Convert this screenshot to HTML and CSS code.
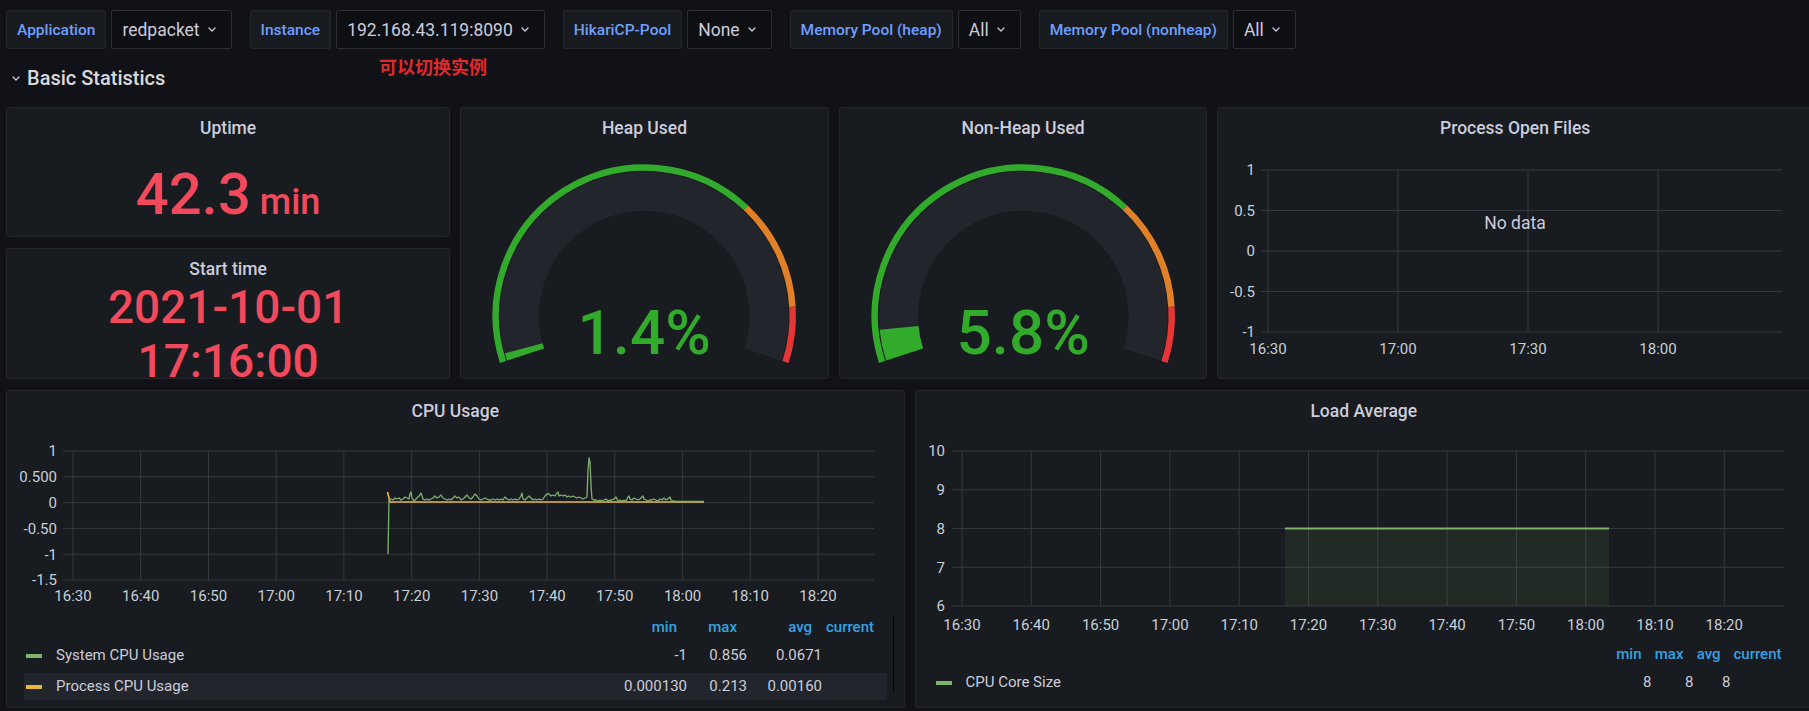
FILE: index.html
```html
<!DOCTYPE html>
<html lang="zh">
<head>
<meta charset="utf-8">
<title>JVM Dashboard</title>
<link rel="stylesheet" href="styles.css">
</head>
<body>
<div class="topbar">
  <div class="var">
    <span class="var-label">Application</span>
    <span class="var-select">redpacket<svg class="chev" width="8" height="5" viewBox="0 0 8 5"><path d="M1 1l3 3 3-3"/></svg></span>
  </div>
  <div class="var">
    <span class="var-label">Instance</span>
    <span class="var-select">192.168.43.119:8090<svg class="chev" width="8" height="5" viewBox="0 0 8 5"><path d="M1 1l3 3 3-3"/></svg></span>
  </div>
  <div class="var">
    <span class="var-label">HikariCP-Pool</span>
    <span class="var-select">None<svg class="chev" width="8" height="5" viewBox="0 0 8 5"><path d="M1 1l3 3 3-3"/></svg></span>
  </div>
  <div class="var">
    <span class="var-label">Memory Pool (heap)</span>
    <span class="var-select">All<svg class="chev" width="8" height="5" viewBox="0 0 8 5"><path d="M1 1l3 3 3-3"/></svg></span>
  </div>
  <div class="var">
    <span class="var-label">Memory Pool (nonheap)</span>
    <span class="var-select">All<svg class="chev" width="8" height="5" viewBox="0 0 8 5"><path d="M1 1l3 3 3-3"/></svg></span>
  </div>
</div>
<div class="note">可以切换实例</div>
<div class="row-title"><svg class="chev" width="8" height="5" viewBox="0 0 8 5"><path d="M1 1l3 3 3-3"/></svg><span>Basic Statistics</span></div>

<div class="grid">
  <section class="panel p-uptime">
    <div class="panel-title">Uptime</div>
    <div class="stat-value"><span>42.3<span class="unit"> min</span></span></div>
  </section>

  <section class="panel p-start">
    <div class="panel-title">Start time</div>
    <div class="stat-value"><span class="date">2021-10-01<br>17:16:00</span></div>
  </section>

  <section class="panel p-heap">
    <div class="panel-title">Heap Used</div>
    <svg class="gauge" width="100%" height="229">
      <svg x="50%" y="167" width="1" height="1" overflow="visible">
        <path class="band" d="M -118.69 38.57 A 124.8 124.8 0 1 1 118.69 38.57"/>
        <path class="band-val" d="M -118.69 38.57 A 124.8 124.8 0 0 1 -120.56 32.25"/>
        <path class="ring g" d="M -141.23 45.89 A 148.5 148.5 0 0 1 101.66 -108.25"/>
        <path class="ring o" d="M 101.66 -108.25 A 148.5 148.5 0 0 1 148.21 -9.32"/>
        <path class="ring r" d="M 148.21 -9.32 A 148.5 148.5 0 0 1 141.23 45.89"/>
        <text class="gauge-text" x="0" y="38">1.4%</text>
      </svg>
    </svg>
  </section>

  <section class="panel p-nonheap">
    <div class="panel-title">Non-Heap Used</div>
    <svg class="gauge" width="100%" height="229">
      <svg x="50%" y="167" width="1" height="1" overflow="visible">
        <path class="band" d="M -118.69 38.57 A 124.8 124.8 0 1 1 118.69 38.57"/>
        <path class="band-val" d="M -118.69 38.57 A 124.8 124.8 0 0 1 -124.23 11.90"/>
        <path class="ring g" d="M -141.23 45.89 A 148.5 148.5 0 0 1 101.66 -108.25"/>
        <path class="ring o" d="M 101.66 -108.25 A 148.5 148.5 0 0 1 148.21 -9.32"/>
        <path class="ring r" d="M 148.21 -9.32 A 148.5 148.5 0 0 1 141.23 45.89"/>
        <text class="gauge-text" x="0" y="38">5.8%</text>
      </svg>
    </svg>
  </section>

  <section class="panel p-files">
    <div class="panel-title">Process Open Files</div>
    <svg class="chart" width="600" height="229">
      <g transform="translate(-1218,-149)">
        <g class="grid-lines">
          <line x1="1261" y1="170" x2="1782" y2="170"/>
          <line x1="1261" y1="210.5" x2="1782" y2="210.5"/>
          <line x1="1261" y1="251" x2="1782" y2="251"/>
          <line x1="1261" y1="291.5" x2="1782" y2="291.5"/>
          <line x1="1261" y1="332" x2="1782" y2="332"/>
          <line x1="1268" y1="170" x2="1268" y2="332"/>
          <line x1="1398" y1="170" x2="1398" y2="332"/>
          <line x1="1528" y1="170" x2="1528" y2="332"/>
          <line x1="1658" y1="170" x2="1658" y2="332"/>
        </g>
        <g class="ylab">
          <text x="1255" y="175">1</text>
          <text x="1255" y="215.5">0.5</text>
          <text x="1255" y="256">0</text>
          <text x="1255" y="296.5">-0.5</text>
          <text x="1255" y="337">-1</text>
        </g>
        <g class="xlab">
          <text x="1268" y="354">16:30</text>
          <text x="1398" y="354">17:00</text>
          <text x="1528" y="354">17:30</text>
          <text x="1658" y="354">18:00</text>
        </g>
        <text class="nodata" x="1515" y="229">No data</text>
      </g>
    </svg>
  </section>

  <section class="panel p-cpu">
    <div class="panel-title">CPU Usage</div>
    <svg class="chart" width="896" height="180">
      <g transform="translate(-7,-432)">
        <g class="grid-lines">
          <line x1="63" y1="451" x2="874" y2="451"/>
          <line x1="63" y1="476.8" x2="874" y2="476.8"/>
          <line x1="63" y1="502.6" x2="874" y2="502.6"/>
          <line x1="63" y1="528.4" x2="874" y2="528.4"/>
          <line x1="63" y1="554.2" x2="874" y2="554.2"/>
          <line x1="63" y1="580" x2="874" y2="580"/>
          <line x1="73" y1="451" x2="73" y2="580"/>
          <line x1="140.7" y1="451" x2="140.7" y2="580"/>
          <line x1="208.5" y1="451" x2="208.5" y2="580"/>
          <line x1="276.2" y1="451" x2="276.2" y2="580"/>
          <line x1="343.9" y1="451" x2="343.9" y2="580"/>
          <line x1="411.7" y1="451" x2="411.7" y2="580"/>
          <line x1="479.4" y1="451" x2="479.4" y2="580"/>
          <line x1="547.1" y1="451" x2="547.1" y2="580"/>
          <line x1="614.8" y1="451" x2="614.8" y2="580"/>
          <line x1="682.6" y1="451" x2="682.6" y2="580"/>
          <line x1="750.3" y1="451" x2="750.3" y2="580"/>
          <line x1="818" y1="451" x2="818" y2="580"/>
        </g>
        <g class="ylab">
          <text x="57" y="456.3">1</text>
          <text x="57" y="482.1">0.500</text>
          <text x="57" y="507.9">0</text>
          <text x="57" y="533.7">-0.50</text>
          <text x="57" y="559.5">-1</text>
          <text x="57" y="585.3">-1.5</text>
        </g>
        <g class="xlab">
          <text x="73" y="601">16:30</text>
          <text x="140.7" y="601">16:40</text>
          <text x="208.5" y="601">16:50</text>
          <text x="276.2" y="601">17:00</text>
          <text x="343.9" y="601">17:10</text>
          <text x="411.7" y="601">17:20</text>
          <text x="479.4" y="601">17:30</text>
          <text x="547.1" y="601">17:40</text>
          <text x="614.8" y="601">17:50</text>
          <text x="682.6" y="601">18:00</text>
          <text x="750.3" y="601">18:10</text>
          <text x="818" y="601">18:20</text>
        </g>
        <polyline class="s-yellow" points="387.5,492 390,502 704,502"/>
        <polyline class="s-green" points="388,554 389,500 391,499 393,500 395,498 397,499 399,498 401,500 403,499 405,497 407,498 409,499 410,494 411,492 412,498 414,501 416,499 418,497 420,495 421,493 423,499 425,500 427,499 429,500 431,499 433,498 435,496 437,498 439,497 441,495 443,498 445,499 447,500 449,499 451,500 453,498 455,496 457,498 459,497 461,500 463,499 465,497 467,495 469,498 471,499 473,497 475,494 477,496 479,499 481,500 483,499 485,498 487,499 489,500 491,500 493,499 495,500 497,499 499,500 501,499 503,500 505,497 507,499 509,500 511,499 513,500 515,499 517,500 519,499 521,496 522,493 523,499 525,500 527,498 529,496 531,498 533,500 535,499 537,500 539,499 541,500 543,499 545,496 547,494 549,494 551,496 553,495 555,496 557,493 558,492 559,496 561,495 563,496 565,495 567,497 569,496 571,497 573,496 575,497 577,498 579,497 581,498 583,499 585,498 587,497 588,470 589,458 590,462 591,485 592,499 594,500 596,500 598,501 600,500 602,501 604,500 606,499 608,501 610,500 612,500 614,499 616,497 618,501 620,500 622,501 624,500 626,501 628,497 629,496 630,499 632,500 634,498 636,499 638,500 640,499 642,497 643,496 644,499 646,500 648,501 650,500 652,500 654,499 656,500 658,501 660,499 662,500 664,498 666,500 668,499 670,497 671,500 673,501 676,501.5 704,501.5"/>
      </g>
    </svg>
    <div class="legend-wrap">
      <div class="legend cpu-legend">
        <div class="lg-row lg-head">
          <span></span><span class="lg-h">min</span><span class="lg-h">max</span><span class="lg-h">avg</span><span class="lg-h">current</span>
        </div>
        <div class="lg-row">
          <span class="lg-name"><i class="sw sw-green"></i>System CPU Usage</span><span class="lg-v">-1</span><span class="lg-v">0.856</span><span class="lg-v">0.0671</span><span class="lg-v"></span>
        </div>
        <div class="lg-row lg-hl">
          <span class="lg-name"><i class="sw sw-yellow"></i>Process CPU Usage</span><span class="lg-v">0.000130</span><span class="lg-v">0.213</span><span class="lg-v">0.00160</span><span class="lg-v"></span>
        </div>
      </div>
      <div class="scroll-line"></div>
    </div>
  </section>

  <section class="panel p-load">
    <div class="panel-title">Load Average</div>
    <svg class="chart" width="896" height="205">
      <g transform="translate(-915,-432)">
        <g class="grid-lines">
          <line x1="951" y1="451" x2="1783" y2="451"/>
          <line x1="951" y1="489.75" x2="1783" y2="489.75"/>
          <line x1="951" y1="528.5" x2="1783" y2="528.5"/>
          <line x1="951" y1="567.25" x2="1783" y2="567.25"/>
          <line x1="951" y1="606" x2="1783" y2="606"/>
          <line x1="961" y1="451" x2="961" y2="606"/>
          <line x1="1030.3" y1="451" x2="1030.3" y2="606"/>
          <line x1="1099.6" y1="451" x2="1099.6" y2="606"/>
          <line x1="1168.9" y1="451" x2="1168.9" y2="606"/>
          <line x1="1238.2" y1="451" x2="1238.2" y2="606"/>
          <line x1="1307.5" y1="451" x2="1307.5" y2="606"/>
          <line x1="1376.8" y1="451" x2="1376.8" y2="606"/>
          <line x1="1446.1" y1="451" x2="1446.1" y2="606"/>
          <line x1="1515.4" y1="451" x2="1515.4" y2="606"/>
          <line x1="1584.7" y1="451" x2="1584.7" y2="606"/>
          <line x1="1654" y1="451" x2="1654" y2="606"/>
          <line x1="1723.3" y1="451" x2="1723.3" y2="606"/>
        </g>
        <g class="ylab">
          <text x="944" y="456.3">10</text>
          <text x="944" y="495">9</text>
          <text x="944" y="533.8">8</text>
          <text x="944" y="572.5">7</text>
          <text x="944" y="611.3">6</text>
        </g>
        <g class="xlab">
          <text x="961" y="630">16:30</text>
          <text x="1030.3" y="630">16:40</text>
          <text x="1099.6" y="630">16:50</text>
          <text x="1168.9" y="630">17:00</text>
          <text x="1238.2" y="630">17:10</text>
          <text x="1307.5" y="630">17:20</text>
          <text x="1376.8" y="630">17:30</text>
          <text x="1446.1" y="630">17:40</text>
          <text x="1515.4" y="630">17:50</text>
          <text x="1584.7" y="630">18:00</text>
          <text x="1654" y="630">18:10</text>
          <text x="1723.3" y="630">18:20</text>
        </g>
        <rect class="area" x="1284" y="528.5" width="324" height="77.5"/>
        <line class="s-green thick" x1="1284" y1="528.5" x2="1608" y2="528.5"/>
      </g>
    </svg>
    <div class="legend load-legend">
      <div class="lg-row lg-head">
        <span></span><span class="lg-h">min</span><span class="lg-h">max</span><span class="lg-h">avg</span><span class="lg-h">current</span>
      </div>
      <div class="lg-row">
        <span class="lg-name"><i class="sw sw-green"></i>CPU Core Size</span><span class="lg-v">8</span><span class="lg-v">8</span><span class="lg-v">8</span><span class="lg-v"></span>
      </div>
    </div>
  </section>
</div>
</body>
</html>
```
FILE: styles.css
```css
html, body {
  margin: 0;
  padding: 0;
  background: #111217;
  overflow: hidden;
}
body {
  width: 1809px;
  height: 711px;
  position: relative;
  font-family: Roboto, "Noto Sans", sans-serif;
  color: #ccccdc;
}

/* ---------- variables bar ---------- */
.topbar {
  display: flex;
  gap: 18px;
  padding: 10px 0 0 6px;
  height: 39px;
}
.var {
  display: flex;
  gap: 5px;
}
.var-label {
  display: flex;
  align-items: center;
  height: 39px;
  box-sizing: border-box;
  padding: 0 10px;
  background: #181b1f;
  border: 1px solid #24262b;
  border-radius: 2px;
  color: #6e9fff;
  font-size: 15.5px;
  font-weight: 500;
}
.var-select {
  display: flex;
  align-items: center;
  gap: 8px;
  height: 39px;
  box-sizing: border-box;
  padding: 0 15px 0 10px;
  background: #0e0f13;
  border: 1px solid #2b2d32;
  border-radius: 2px;
  color: #ccccdc;
  font-size: 17.5px;
}
.chev path {
  fill: none;
  stroke: #ccccdc;
  stroke-width: 1.3;
  stroke-linecap: round;
  stroke-linejoin: round;
}

.note {
  position: absolute;
  left: 379px;
  top: 53px;
  line-height: 26px;
  font-family: "Noto Sans CJK SC", "Noto Sans", sans-serif;
  font-size: 18px;
  font-weight: 700;
  color: #e0292b;
}

/* ---------- row header ---------- */
.row-title {
  display: flex;
  align-items: center;
  gap: 7px;
  height: 58px;
  padding-left: 12px;
  font-size: 20px;
  font-weight: 500;
  color: #d8d9da;
}

/* ---------- panel grid ---------- */
.grid {
  display: grid;
  grid-template-columns: repeat(24, minmax(0, 1fr));
  grid-template-rows: 130px 131px 318px;
  column-gap: 10px;
  row-gap: 11px;
  width: 1807px;
  margin-left: 6px;
}
.panel {
  background: #181b1f;
  border: 1px solid #24262b;
  border-radius: 3px;
  overflow: hidden;
  display: flex;
  flex-direction: column;
  min-width: 0;
}
.p-uptime  { grid-column: 1 / 7;   grid-row: 1; }
.p-start   { grid-column: 1 / 7;   grid-row: 2; }
.p-heap    { grid-column: 7 / 12;  grid-row: 1 / 3; }
.p-nonheap { grid-column: 12 / 17; grid-row: 1 / 3; }
.p-files   { grid-column: 17 / 25; grid-row: 1 / 3; }
.p-cpu     { grid-column: 1 / 13;  grid-row: 3; }
.p-load    { grid-column: 13 / 25; grid-row: 3; }

.panel-title {
  flex: none;
  padding: 10px 0 11px;
  line-height: 20px;
  text-align: center;
  font-size: 17.5px;
  font-weight: 500;
  color: #ccccdc;
}

/* ---------- stat ---------- */
.stat-value {
  flex: 1 1 0;
  min-height: 0;
  display: flex;
  align-items: center;
  justify-content: center;
  color: #f2495c;
  font-size: 58px;
  font-weight: 500;
  line-height: 1;
  padding-top: 3px;
}
.unit {
  font-size: 36px;
}
.date {
  font-size: 46px;
  line-height: 54px;
  text-align: center;
}
.p-start .stat-value {
  padding-top: 0;
}

/* ---------- gauge ---------- */
.gauge {
  display: block;
  flex: none;
}
.band {
  fill: none;
  stroke: #22252b;
  stroke-width: 39;
}
.band-val {
  fill: none;
  stroke: #32ab2d;
  stroke-width: 39;
}
.ring {
  fill: none;
  stroke-width: 6.5;
}
.ring.g { stroke: #32ab2d; }
.ring.o { stroke: #e0812a; }
.ring.r { stroke: #e53535; }
.gauge-text {
  font-family: Roboto, sans-serif;
  font-size: 62px;
  font-weight: 500;
  fill: #32ab2d;
  text-anchor: middle;
}

/* ---------- charts ---------- */
.chart {
  display: block;
  flex: none;
}
.grid-lines line {
  stroke: #35383e;
  stroke-width: 1;
}
.ylab text,
.xlab text {
  font-family: Roboto, sans-serif;
  font-size: 15px;
  fill: #c7d0d9;
}
.ylab text { text-anchor: end; }
.xlab text { text-anchor: middle; }
.nodata {
  font-family: Roboto, sans-serif;
  font-size: 17.5px;
  fill: #ccccdc;
  text-anchor: middle;
}
.s-green {
  fill: none;
  stroke: #7eb26d;
  stroke-width: 1.3;
  stroke-linejoin: round;
}
.s-green.thick {
  stroke-width: 2;
}
.s-yellow {
  fill: none;
  stroke: #eab839;
  stroke-width: 1.6;
}
.area {
  fill: rgba(126, 178, 109, 0.1);
}

/* ---------- legend ---------- */
.legend-wrap {
  display: flex;
  align-items: flex-start;
  margin-left: 17px;
}
.legend {
  font-size: 15px;
  color: #ccccdc;
}
.lg-row {
  display: grid;
  height: 27px;
  line-height: 27px;
  white-space: nowrap;
}
.cpu-legend {
  width: 863px;
  padding-top: 2px;
}
.cpu-legend .lg-row {
  grid-template-columns: 1fr 80px 60px 75px 62px;
  padding-right: 3px;
}
.cpu-legend .lg-head {
  height: 26px;
  line-height: 26px;
  margin-bottom: 2px;
}
.cpu-legend .lg-hl {
  margin-top: 4px;
}
.load-legend {
  width: 858px;
  margin-left: 18px;
  padding-top: 4px;
}
.load-legend .lg-row {
  grid-template-columns: 1fr 53px 42px 37px 61px;
}
.load-legend .lg-head {
  height: 26px;
  line-height: 26px;
  margin-bottom: 2px;
}
.lg-h {
  text-align: right;
  padding-right: 10px;
  color: #33a2e5;
  font-weight: 500;
}
.lg-v {
  text-align: right;
}
.lg-name {
  display: flex;
  align-items: center;
  gap: 14px;
  padding-left: 2px;
}
.sw {
  display: block;
  width: 16px;
  height: 4px;
}
.sw-green { background: #7eb26d; }
.sw-yellow { background: #eab839; }
.lg-hl {
  background: #22252b;
}
.scroll-line {
  width: 1px;
  height: 78px;
  margin-left: 6px;
  margin-top: 3px;
  background: #050506;
}
```
